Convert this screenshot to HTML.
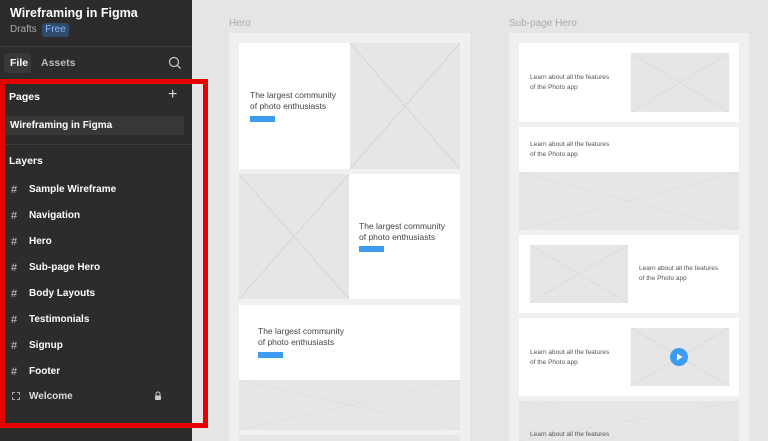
<!DOCTYPE html>
<html style="width:768px;height:441px;overflow:hidden"><head><style>
*{margin:0;padding:0;box-sizing:border-box}
body{width:768px;height:441px;overflow:hidden;background:#e5e5e5;font-family:"Liberation Sans",sans-serif;position:relative}
.sb{position:absolute;left:0;top:0;width:192px;height:441px;background:#2c2c2c;color:#fff}
.a{position:absolute;white-space:nowrap}
.sep{position:absolute;left:0;width:192px;height:1px;background:#3d3d3d}
.b{font-weight:bold;font-size:11px}
.frame{position:absolute;background:#f0f0f0}
.card{position:absolute;background:#fff}
.img{position:absolute;background:#e6e6e6;overflow:hidden}
.img svg{position:absolute;left:0;top:0;width:100%;height:100%}
.h{position:absolute;font-size:8.5px;color:#444;line-height:11px;white-space:nowrap}
.s{position:absolute;font-size:6.5px;color:#555;line-height:10px;white-space:nowrap}
.btn{position:absolute;width:25px;height:6px;background:#3d9bf0}
.lbl{position:absolute;font-size:10px;color:#aaa}
.hs{position:absolute;left:11px;font-size:11px;color:#ccc;line-height:12px}
</style></head><body>
<div class="sb">
<div class="a" style="left:10px;top:6px;font-size:12.5px;font-weight:bold">Wireframing in Figma</div>
<div class="a" style="left:128px;top:6px;font-size:9px;color:#bbb">⌄</div>
<div class="a" style="left:10px;top:24px;font-size:10px;color:#aaa">Drafts</div>
<div class="a" style="left:42px;top:23px;width:27px;height:14px;background:#2f4a6b;border-radius:3px;color:#8cb8ff;font-size:10px;text-align:center;line-height:14px">Free</div>
<div class="sep" style="top:46px"></div>
<div class="a" style="left:4px;top:53px;width:27px;height:20px;background:#383838;border-radius:3px"></div>
<div class="a b" style="left:10px;top:57px;font-size:10.5px">File</div>
<div class="a" style="left:41px;top:57px;font-size:10.5px;color:#bbb;font-weight:bold">Assets</div>
<svg class="a" style="left:168px;top:56px" width="14" height="14" viewBox="0 0 14 14"><circle cx="6" cy="6" r="4.5" fill="none" stroke="#ccc" stroke-width="1.2"/><path d="M9.3 9.3L12.5 12.5" stroke="#ccc" stroke-width="1.3"/></svg>
<div class="sep" style="top:80px"></div>
<div class="a b" style="left:9px;top:91px;font-size:10.5px">Pages</div>
<div class="a" style="left:168px;top:86px;font-size:16px;color:#ddd">+</div>
<div class="a" style="left:4px;top:116px;width:180px;height:19px;background:#383838;border-radius:2px"></div>
<div class="a b" style="left:10px;top:120px;font-size:10px">Wireframing in Figma</div>
<div class="sep" style="top:144px"></div>
<div class="a b" style="left:9px;top:155px;font-size:10.5px">Layers</div>
<div class="hs" style="top:184px">#</div><div class="a b" style="left:29px;top:184px;font-size:10px">Sample Wireframe</div>
<div class="hs" style="top:210px">#</div><div class="a b" style="left:29px;top:210px;font-size:10px">Navigation</div>
<div class="hs" style="top:236px">#</div><div class="a b" style="left:29px;top:236px;font-size:10px">Hero</div>
<div class="hs" style="top:262px">#</div><div class="a b" style="left:29px;top:262px;font-size:10px">Sub-page Hero</div>
<div class="hs" style="top:288px">#</div><div class="a b" style="left:29px;top:288px;font-size:10px">Body Layouts</div>
<div class="hs" style="top:314px">#</div><div class="a b" style="left:29px;top:314px;font-size:10px">Testimonials</div>
<div class="hs" style="top:340px">#</div><div class="a b" style="left:29px;top:340px;font-size:10px">Signup</div>
<div class="hs" style="top:366px">#</div><div class="a b" style="left:29px;top:366px;font-size:10px">Footer</div>
<div class="a" style="left:12px;top:392px;width:8px;height:8px;border:1px dashed #aaa"></div><div class="a b" style="left:29px;top:391px;font-size:10px;color:#ddd">Welcome</div>
<svg class="a" style="left:154px;top:391px" width="8" height="10" viewBox="0 0 8 10"><path d="M2 4.5V3a2 2 0 0 1 4 0v1.5" fill="none" stroke="#ccc" stroke-width="1"/><rect x="1" y="4.5" width="6" height="4.5" rx="1" fill="#ccc"/></svg>
</div>
<div class="a" style="left:0;top:79px;width:208px;height:349px;border:5px solid #e60000"></div>

<div class="lbl" style="left:229px;top:18px">Hero</div>
<div class="lbl" style="left:509px;top:18px">Sub-page Hero</div>

<div class="frame" style="left:229px;top:33px;width:241px;height:408px"></div>
<div class="card" style="left:239px;top:43px;width:221px;height:126px"></div>
<div class="img" style="left:350px;top:43px;width:110px;height:126px"><svg preserveAspectRatio="none" viewBox="0 0 10 10"><path d="M0 0L10 10M10 0L0 10" stroke="#d4d4d4" stroke-width=".08"/></svg></div>
<div class="h" style="left:250px;top:90px">The largest community<br>of photo enthusiasts</div><div class="btn" style="left:250px;top:116px"></div>
<div class="card" style="left:239px;top:174px;width:221px;height:125px"></div>
<div class="img" style="left:239px;top:174px;width:110px;height:125px"><svg preserveAspectRatio="none" viewBox="0 0 10 10"><path d="M0 0L10 10M10 0L0 10" stroke="#d4d4d4" stroke-width=".08"/></svg></div>
<div class="h" style="left:359px;top:221px">The largest community<br>of photo enthusiasts</div><div class="btn" style="left:359px;top:246px"></div>
<div class="card" style="left:239px;top:305px;width:221px;height:75px"></div>
<div class="h" style="left:258px;top:326px">The largest community<br>of photo enthusiasts</div><div class="btn" style="left:258px;top:352px"></div>
<div class="img" style="left:239px;top:380px;width:221px;height:50px"><svg preserveAspectRatio="none" viewBox="0 0 10 10"><path d="M0 0L10 10M10 0L0 10" stroke="#d4d4d4" stroke-width=".05"/></svg></div>
<div class="img" style="left:239px;top:435px;width:221px;height:6px"></div>

<div class="frame" style="left:509px;top:33px;width:240px;height:408px"></div>
<div class="card" style="left:519px;top:43px;width:220px;height:79px"></div>
<div class="s" style="left:530px;top:73px">Learn about all the features<br>of the Photo app</div>
<div class="img" style="left:631px;top:53px;width:98px;height:59px"><svg preserveAspectRatio="none" viewBox="0 0 10 10"><path d="M0 0L10 10M10 0L0 10" stroke="#d4d4d4" stroke-width=".08"/></svg></div>
<div class="card" style="left:519px;top:127px;width:220px;height:46px"></div>
<div class="s" style="left:530px;top:140px">Learn about all the features<br>of the Photo app</div>
<div class="img" style="left:519px;top:172px;width:220px;height:58px"><svg preserveAspectRatio="none" viewBox="0 0 10 10"><path d="M0 0L10 10M10 0L0 10" stroke="#d4d4d4" stroke-width=".05"/></svg></div>
<div class="card" style="left:519px;top:235px;width:220px;height:78px"></div>
<div class="img" style="left:530px;top:245px;width:98px;height:58px"><svg preserveAspectRatio="none" viewBox="0 0 10 10"><path d="M0 0L10 10M10 0L0 10" stroke="#d4d4d4" stroke-width=".08"/></svg></div>
<div class="s" style="left:639px;top:264px">Learn about all the features<br>of the Photo app</div>
<div class="card" style="left:519px;top:318px;width:220px;height:78px"></div>
<div class="s" style="left:530px;top:348px">Learn about all the features<br>of the Photo app</div>
<div class="img" style="left:631px;top:328px;width:98px;height:58px"><svg preserveAspectRatio="none" viewBox="0 0 10 10"><path d="M0 0L10 10M10 0L0 10" stroke="#d4d4d4" stroke-width=".08"/></svg></div>
<svg class="a" style="left:670px;top:348px" width="18" height="18" viewBox="0 0 18 18"><circle cx="9" cy="9" r="9" fill="#3d9bf0"/><path d="M7 5.5L12.5 9L7 12.5Z" fill="#fff"/></svg>
<div class="img" style="left:519px;top:401px;width:220px;height:40px"><svg preserveAspectRatio="none" viewBox="0 0 10 10"><path d="M0 0L10 10M10 0L0 10" stroke="#d4d4d4" stroke-width=".05"/></svg></div>
<div class="s" style="left:530px;top:430px">Learn about all the features</div>
</body></html>
